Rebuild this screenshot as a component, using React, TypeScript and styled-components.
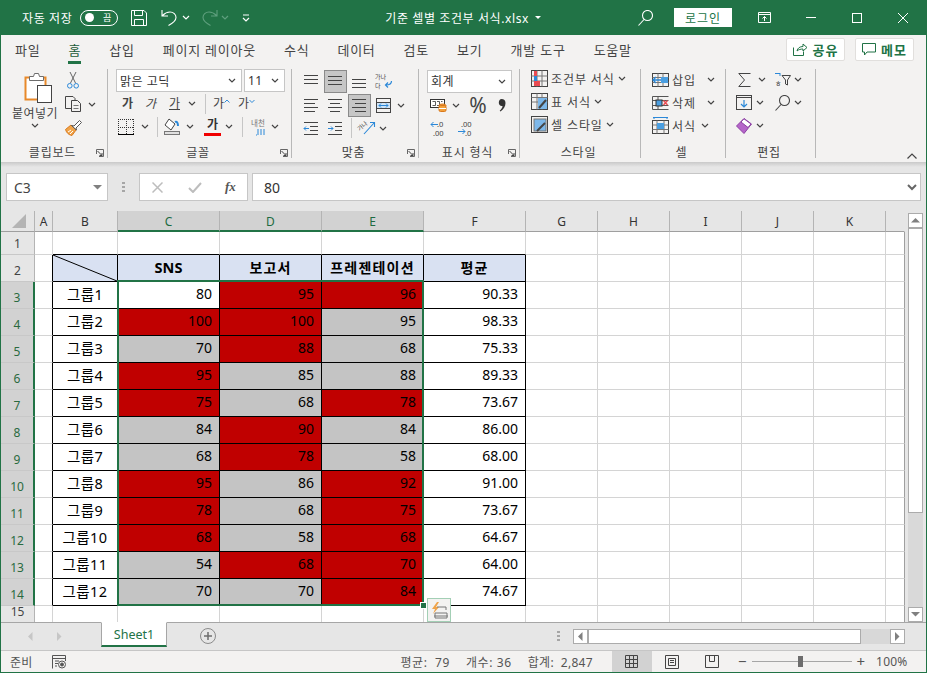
import React from "react";
import styled, { createGlobalStyle } from "styled-components";

const GREEN = "#217346";
const FONT = `"Noto Sans", "Noto Sans CJK KR", sans-serif`;

const Global = createGlobalStyle`
  html, body { margin: 0; padding: 0; background: #fff; }
  body { font-family: ${FONT}; }
  svg { display: block; }
`;

const Win = styled.div`
  width: 927px; height: 673px; box-sizing: border-box; display: flex; flex-direction: column;
  border: 1px solid ${GREEN}; border-top: 0; overflow: hidden; background: #e6e6e6; position: relative;
`;
const TitleBar = styled.div`
  height: 35px; flex: none; background: ${GREEN}; color: #fff; display: flex; align-items: center;
  padding-left: 22px; font-size: 12px; margin: 0 -1px;
`;
const Slot = styled.div<{ $w?: number; $ml?: number; $mt?: number }>`
  flex: none; display: flex; align-items: center; justify-content: center;
  ${(p) => (p.$w !== undefined ? `width: ${p.$w}px;` : "")}
  ${(p) => (p.$ml ? `margin-left: ${p.$ml}px;` : "")}
  ${(p) => (p.$mt ? `margin-top: ${p.$mt}px;` : "")}
`;
const TitleText = styled.span<{ $ml?: number }>`
  margin-left: ${(p) => p.$ml || 0}px; letter-spacing: 0.6px; white-space: nowrap; font-size: 12px; flex: none;
`;
const Toggle = styled.div`
  margin-left: 8px; width: 38px; height: 16px; box-sizing: border-box; border: 1px solid #fff; border-radius: 8px;
  display: flex; align-items: center; justify-content: space-between; padding: 0 6px 0 4px; font-size: 9px; flex: none;
  &::before { content: ""; width: 9px; height: 9px; border-radius: 50%; background: #fff; }
`;
const LoginBtn = styled.div`
  margin-left: 21px; width: 58px; height: 19px; background: #fff; color: ${GREEN}; font-size: 12px; letter-spacing: 1px;
  display: flex; align-items: center; justify-content: center; flex: none;
`;

const TabsRow = styled.div`
  height: 29px; flex: none; background: #f3f2f1; display: flex; align-items: center; gap: 28px; padding-left: 14px;
`;
const Tab = styled.div<{ $on?: boolean }>`
  position: relative; font-size: 13px; letter-spacing: 0.77px; color: ${(p) => (p.$on ? "#1d5c39" : "#444")}; white-space: nowrap; line-height: 18px; margin-top: 1px;
  ${(p) => p.$on ? `&::after { content: ""; position: absolute; left: 0; right: 0; bottom: -5px; height: 3px; background: ${GREEN}; }` : ""}
`;
const TabsEnd = styled.div`
  margin-left: auto; display: flex; gap: 10px; padding-right: 12px; margin-top: -1px;
`;
const ShareBtn = styled.div`
  width: 59px; height: 23px; box-sizing: border-box; background: #fff; border: 1px solid #e1dfdd; border-radius: 2px; display: flex; align-items: center; justify-content: center; gap: 5px;
  color: ${GREEN}; font-weight: 700; font-size: 13px; letter-spacing: 1px;
`;

const Ribbon = styled.div`
  height: 98px; flex: none; background: #f3f2f1; display: flex; padding-top: 5px; box-sizing: border-box; padding-bottom: 4px; position: relative;
`;
const Group = styled.div<{ $w: number }>`
  width: ${(p) => p.$w}px; box-sizing: border-box; flex: none; border-right: 1px solid #b8b8b8; display: flex; flex-direction: column;
`;
const GroupBody = styled.div<{ $pl?: number; $mt?: number }>`
  flex: 1; display: flex; flex-direction: column; padding-left: ${(p) => p.$pl || 0}px; margin-top: ${(p) => p.$mt || 0}px; min-height: 0;
`;
const GroupLabel = styled.div`
  height: 13px; flex: none; display: grid; grid-template-columns: 1fr auto 1fr; align-items: center; font-size: 12px; color: #444; letter-spacing: 0.8px; padding-right: 3px;
  & > span { grid-column: 2; white-space: nowrap; margin-top: -2px; }
  & > svg { grid-column: 3; justify-self: end; }
`;
const RRow = styled.div<{ $h?: number }>`
  height: ${(p) => p.$h || 23}px; flex: none; display: flex; align-items: center;
`;
const Combo = styled.div<{ $w: number; $ml?: number }>`
  width: ${(p) => p.$w}px; height: 23px; box-sizing: border-box; border: 1px solid #c6c6c6; background: #fff; margin-left: ${(p) => p.$ml || 0}px;
  display: flex; align-items: center; justify-content: space-between; padding: 0 5px 0 3px; font-size: 12px; color: #333; letter-spacing: 0.5px; flex: none;
`;
const Glyph = styled.span<{ $size?: number; $bold?: boolean; $italic?: boolean; $under?: boolean; $color?: string }>`
  font-size: ${(p) => p.$size || 12}px; font-weight: ${(p) => (p.$bold ? 700 : 400)}; color: ${(p) => p.$color || "#444"};
  font-style: ${(p) => (p.$italic ? "italic" : "normal")}; text-decoration: ${(p) => (p.$under ? "underline" : "none")}; line-height: 1;
`;
const VSep = styled.div<{ $w: number }>`
  width: ${(p) => p.$w}px; flex: none; height: 20px; display: flex; justify-content: center;
  &::after { content: ""; width: 1px; height: 100%; background: #c6c6c6; }
`;
const Selected = styled.div`
  width: 23px; height: 23px; box-sizing: border-box; background: #c6c6c6; border: 1px solid #8a8a8a; display: flex; align-items: center; justify-content: center;
`;
const RedGlyph = styled.div`
  display: flex; flex-direction: column; align-items: center; width: 17px; font-size: 12px; font-weight: 700; color: #333; line-height: 14px;
  &::after { content: ""; width: 17px; height: 3px; background: #f00000; margin-top: 1px; }
`;
const PasteCol = styled.div`
  width: 50px; margin-left: 9px; display: flex; flex-direction: column; align-items: center; flex: none; font-size: 12px; color: #444; letter-spacing: 0.4px; white-space: nowrap;
`;
const PasteText = styled.span`
  margin-top: 1px; line-height: 18px;
`;
const ClipBody = styled.div`
  flex: 1; display: flex; padding-top: 2px; min-height: 0;
`;
const SmallCol = styled.div`
  display: flex; flex-direction: column; margin-left: 5px; margin-top: -3px;
`;
const RibbonText = styled.span<{ $ml?: number }>`
  margin-left: ${(p) => p.$ml ?? 3}px; font-size: 12px; letter-spacing: 0.9px; color: #444; white-space: nowrap;
`;
const Collapse = styled.div`
  position: absolute; right: 9px; bottom: 3px;
`;

const Shadow = styled.div`
  height: 5px; flex: none; background: linear-gradient(#c9c9c9, #e6e6e6);
`;
const FormulaArea = styled.div`
  height: 44px; flex: none; display: flex; align-items: flex-start; padding: 6px 0 0 5px; box-sizing: border-box; background: #e6e6e6;
`;
const NameBox = styled.div`
  width: 102px; height: 28px; box-sizing: border-box; border: 1px solid #c6c6c6; background: #fff; display: flex; align-items: center; justify-content: space-between; padding: 0 5px 0 7px; font-size: 14px; color: #444; flex: none;
`;
const GripSlot = styled.div`
  width: 3px; height: 28px; margin: 0 14px; flex: none; display: flex; align-items: center;
`;
const FxBox = styled.div`
  width: 109px; height: 28px; box-sizing: border-box; border: 1px solid #c6c6c6; background: #fff; display: flex; align-items: center; flex: none; padding-left: 12px;
`;
const FxText = styled.span`
  font-family: "Liberation Serif", serif; font-style: italic; font-weight: 700; font-size: 13px; color: #555;
`;
const FormulaInput = styled.div`
  margin-left: 4px; width: 669px; height: 28px; box-sizing: border-box; border: 1px solid #c6c6c6; background: #fff; display: flex; align-items: center; justify-content: space-between; padding: 0 3px 0 11px; font-size: 14px; color: #333; flex: none;
`;

const Sheet = styled.div`
  height: 411px; flex: none; display: flex;
`;
const GridWrap = styled.div`
  position: relative; width: 904px; height: 411px; overflow: hidden; flex: none; background: #fff;
`;
const Grid = styled.div`
  display: grid;
  grid-template-columns: 34px 18px 65px repeat(4, 102px) repeat(5, 72px) 19px;
  grid-template-rows: 21px 23px repeat(13, 27px) 17px;
`;
const ColHead = styled.div<{ $sel?: boolean; $end?: boolean }>`
  background: ${(p) => (p.$sel ? "#d2d2d2" : "#e6e6e6")};
  box-sizing: border-box; display: flex; align-items: center; justify-content: center; font-size: 12px;
  color: ${(p) => (p.$sel ? "#1d6b41" : "#333")};
  border-right: 1px solid ${(p) => (p.$end ? "transparent" : "#b4b4b4")};
  border-bottom: ${(p) => (p.$sel ? `2px solid ${GREEN}` : "1px solid #9f9f9f")};
  ${(p) => (p.$sel ? "padding-top: 1px;" : "")}
`;
const RowHead = styled.div<{ $sel?: boolean }>`
  box-sizing: border-box; background: ${(p) => (p.$sel ? "#d2d2d2" : "#e6e6e6")};
  color: ${(p) => (p.$sel ? "#2a6a3f" : "#444")}; font-size: 12px;
  display: flex; align-items: flex-end; justify-content: center; line-height: 20px;
  border-bottom: 1px solid #c8c8c8;
  border-right: ${(p) => (p.$sel ? `2px solid ${GREEN}` : "1px solid #b4b4b4")};
`;
type Kind = "label" | "num" | "head" | "latin" | "none";
const Cell = styled.div<{ $dr?: boolean; $db?: boolean; $bg?: string; $end?: boolean; $kind?: Kind }>`
  box-sizing: border-box; overflow: hidden; white-space: nowrap; color: #000; font-size: 14px; display: flex; align-items: center;
  background: ${(p) => p.$bg || "#fff"};
  border-right: 1px solid ${(p) => (p.$dr ? "#000" : p.$end ? "#9f9f9f" : "#d4d4d4")};
  border-bottom: 1px solid ${(p) => (p.$db ? "#000" : "#d4d4d4")};
  ${(p) => p.$kind === "num" ? "justify-content: flex-end; padding: 0 7px 3px 0;" : ""}
  ${(p) => p.$kind === "label" ? "justify-content: center; letter-spacing: 0.4px; font-size: 14.5px; padding-bottom: 3px;" : ""}
  ${(p) => p.$kind === "head" ? "justify-content: center; font-weight: 700; letter-spacing: 1.2px; padding-bottom: 3px;" : ""}
  ${(p) => p.$kind === "latin" ? "justify-content: center; font-weight: 700; font-size: 14.5px; padding-bottom: 3px;" : ""}
`;
const Selection = styled.div`
  position: absolute; left: 116px; top: 69px; width: 307px; height: 326px; box-sizing: border-box; border: 2px solid ${GREEN}; pointer-events: none;
`;
const FillHandle = styled.div`
  position: absolute; left: 419px; top: 391px; width: 7px; height: 7px; box-sizing: border-box; background: ${GREEN}; border: 1px solid #fff;
`;
const PasteOpt = styled.div`
  position: absolute; left: 426px; top: 387px; width: 24px; height: 24px; box-sizing: border-box; background: #f3f2f1; border: 1px solid #a3cfb5; display: flex; align-items: center; justify-content: center;
`;

const VScroll = styled.div`
  flex: 1; display: flex; flex-direction: column; padding: 2px 0 0 3px;
`;
const ScrollBtn = styled.div`
  width: 15px; height: 15px; box-sizing: border-box; background: #fff; border: 1px solid #ababab; display: flex; align-items: center; justify-content: center; flex: none;
`;
const VTrack = styled.div`
  flex: 1; width: 15px; background: #d9d9d9; display: flex; flex-direction: column;
`;
const VThumb = styled.div`
  height: 285px; box-sizing: border-box; background: #fff; border: 1px solid #ababab;
`;

const TabBar = styled.div`
  height: 28px; flex: none; box-sizing: border-box; border-top: 1px solid #a6a6a6; background: #e6e6e6; display: flex; align-items: flex-start;
`;
const SheetTab = styled.div`
  margin-left: 39px; width: 66px; height: 25px; box-sizing: border-box; margin-top: -1px; background: #fff; border: 1px solid #a6a6a6; border-top: 1px solid #fff; border-bottom: 2px solid ${GREEN};
  color: ${GREEN}; font-size: 12.5px; display: flex; align-items: center; justify-content: center; flex: none;
`;
const HTrack = styled.div`
  margin-left: 13px; margin-top: 6px; width: 332px; height: 15px; display: flex; flex: none;
`;
const HThumb = styled.div`
  width: 273px; box-sizing: border-box; background: #fff; border: 1px solid #ababab; flex: none;
`;
const HRest = styled.div`
  flex: 1; background: #d8d8d8;
`;

const StatusBar = styled.div`
  flex: 1; background: #f3f2f1; border-top: 1px solid #c6c6c6; display: flex; align-items: stretch; font-size: 12px; color: #555; padding-left: 9px;
`;
const StatusText = styled.span<{ $ml?: number; $ls?: number }>`
  margin-left: ${(p) => p.$ml || 0}px; align-self: center; white-space: nowrap; letter-spacing: ${(p) => p.$ls ?? 0.2}px; flex: none;
`;
const ViewBtn = styled.div<{ $on?: boolean; $ml?: number }>`
  width: 40px; flex: none; margin-left: ${(p) => p.$ml || 0}px; background: ${(p) => (p.$on ? "#d2d2d2" : "transparent")}; display: flex; align-items: center; justify-content: center;
`;
const Zoom = styled.div`
  width: 100px; height: 1px; background: #a6a6a6; align-self: center; display: flex; justify-content: center; align-items: center; margin-left: 5px; flex: none;
  &::after { content: ""; width: 5px; height: 11px; background: #6d6d6d; margin-left: -3px; }
`;
const ZoomSign = styled.span<{ $ml?: number }>`
  margin-left: ${(p) => p.$ml || 0}px; align-self: center; font-size: 15px; line-height: 1; color: #555; flex: none;
`;

/* ---------- icons ---------- */
type C = { c?: string };
const Chev = ({ c = "#444" }: C) => (
  <svg width="8" height="5" viewBox="0 0 8 5"><path d="M1 1l3 3 3-3" fill="none" stroke={c} strokeWidth="1.2" /></svg>
);
const Caret = ({ up }: { up?: boolean }) => (
  <svg width="6" height="9" viewBox="0 0 6 9" fill="none" stroke="#2b88d8"><path d={up ? "M.5 3.500L3 1l2.500 2.500" : "M.5 1L3 3.500 5.500 1"} /></svg>
);
const SaveI = () => (
  <svg width="16" height="16" viewBox="0 0 16 16" fill="none" stroke="#fff"><path d="M.5.5h12.5l2.5 2.5v12.5H.5z" /><path d="M3.5.5v5h8v-5M3.5 15.5v-6h9v6" /></svg>
);
const UndoI = ({ c = "#fff" }: C) => (
  <svg width="17" height="17" viewBox="0 0 17 17" fill="none" stroke={c} strokeWidth="1.1"><path d="M1 1v6h6M1.5 6.5C4 4 6 3 9 3c3.5 0 6 2.5 6 5.5 0 3-3 5.500-7.500 8" /></svg>
);
const RedoI = ({ c = "#5f9f7e" }: C) => (
  <svg width="17" height="17" viewBox="0 0 17 17" fill="none" stroke={c} strokeWidth="1.1"><path d="M16 1v6h-6M15.500 6.500C13 4 11 3 8 3 4.500 3 2 5.500 2 8.500c0 3 3 5.500 7.500 8" /></svg>
);
const QatI = () => (
  <svg width="8" height="8" viewBox="0 0 8 8" fill="none" stroke="#fff"><path d="M1 1h6" /><path d="M1 4l3 3 3-3" strokeWidth="1.2" /></svg>
);
const SearchI = ({ c = "#fff" }: C) => (
  <svg width="15" height="16" viewBox="0 0 15 16" fill="none" stroke={c} strokeWidth="1.1"><circle cx="9.500" cy="5.500" r="5" /><path d="M6 9.500L.5 15.500" /></svg>
);
const DisplayI = () => (
  <svg width="13" height="11" viewBox="0 0 13 11" fill="none" stroke="#fff"><path d="M.5.500h12v10H.5zM.5 2.500h12" strokeWidth="1" /><path d="M6.500 9V4.500M4.500 6.500l2-2 2 2" /></svg>
);
const MinI = () => <svg width="10" height="1"><rect width="10" height="1" fill="#fff" /></svg>;
const MaxI = () => <svg width="10" height="10"><rect x=".5" y=".5" width="9" height="9" fill="none" stroke="#fff" /></svg>;
const CloseI = () => <svg width="10" height="10" fill="none" stroke="#fff"><path d="M0 0l10 10M10 0L0 10" /></svg>;
const ShareI = () => (
  <svg width="15" height="14" viewBox="0 0 15 14" fill="none" stroke="#217346"><path d="M.5 5.500v8h10v-4" /><path d="M4 9c.5-3 3-4.500 6-4.500V2l4 3.500L10 9V7C8 7 5.500 7.500 4 9z" /></svg>
);
const CommentI = () => (
  <svg width="14" height="13" viewBox="0 0 14 13" fill="none" stroke="#217346"><path d="M.5.500h13v8.500H5L2.500 12V9h-2z" /></svg>
);
const PasteI = () => (
  <svg width="30" height="33" viewBox="0 0 30 33">
    <rect x="1.500" y="6.500" width="20" height="22" fill="#fff" stroke="#e8892b" strokeWidth="2" />
    <path d="M5.500 9.500v-4h4l1-3h4l1 3h4v4z" fill="#fff" stroke="#6d6d6d" />
    <rect x="13.500" y="14.500" width="14" height="17" fill="#fff" stroke="#444" />
  </svg>
);
const ScissorsI = () => (
  <svg width="12" height="17" viewBox="0 0 12 17" fill="none"><path d="M3 0l5.500 11M9 0L3.500 11" stroke="#666" /><circle cx="2.800" cy="13.800" r="2.300" stroke="#2b88d8" /><circle cx="9.200" cy="13.800" r="2.300" stroke="#2b88d8" /></svg>
);
const CopyI = () => (
  <svg width="17" height="16" viewBox="0 0 17 16" fill="none" stroke="#444"><path d="M6 12.500H.5V.500H8l2 2v2" /><path d="M6.500 4.500h6l3 3v8h-9z" fill="#f3f2f1" /><path d="M8.500 9.500h5M8.500 12.500h5" stroke="#777" /></svg>
);
const BrushI = () => (
  <svg width="17" height="16" viewBox="0 0 17 16"><path d="M.5 9.500L6 5l5 5-4 5.500C4 15 1.500 13 .5 9.500z" fill="#f0a44a" stroke="#d9781b" /><path d="M3 12l3-2M5 14l3-3" stroke="#fff" fill="none" /><path d="M6.500 5.500L9 6l5.500-5.500 2 2L11 8l.5 2z" fill="#fff" stroke="#555" /></svg>
);
const ExpandI = () => (
  <svg width="8" height="8" viewBox="0 0 8 8" fill="none" stroke="#666"><path d="M.500 5V.500H7.500V7.500H3" /><path d="M1.500 2L6 6.500M6 4v2.500H3.500" stroke="#444" /></svg>
);
const BorderI = () => (
  <svg width="16" height="16" viewBox="0 0 16 16" fill="none" shapeRendering="crispEdges"><path d="M0 .5h16M0 8h16M.5 0v16M8 0v16M15.500 0v16" stroke="#333" strokeDasharray="1 1" /><path d="M0 15.500h16" stroke="#000" /></svg>
);
const BucketI = () => (
  <svg width="17" height="17" viewBox="0 0 17 17" fill="none"><path d="M5 1L1 7l6 5 4-6z" stroke="#444" fill="#fff" /><path d="M11 4c2-1 3 1 3 4" stroke="#2b88d8" strokeWidth="2" /><rect x=".5" y="13.500" width="15" height="3" fill="#e0e0e0" stroke="#777" /></svg>
);
const PhoneticI = () => (
  <svg width="16" height="18" viewBox="0 0 16 18"><text x="0" y="8" fontSize="7.500" fill="#777" fontFamily="Noto Sans CJK KR">내천</text><path d="M7 11v6M10 11v6M13 11v6M5 17h1" stroke="#2b88d8" fill="none" /></svg>
);
const Lines = ({ d, children }: { d: number[][]; children?: React.ReactNode }) => (
  <svg width="16" height="16" viewBox="0 0 16 16" fill="none">
    {d.map(([a, y, b], i) => <path key={i} d={`M${a} ${y + 0.5}H${b}`} stroke="#444" />)}
    {children}
  </svg>
);
const WrapI = () => (
  <svg width="18" height="17" viewBox="0 0 18 17" fill="none" overflow="visible">
    <text x="0" y="5.500" fontSize="6" fill="#444" fontFamily="Noto Sans CJK KR">가나</text>
    <text x="0" y="14.500" fontSize="6" fill="#444" fontFamily="Noto Sans CJK KR">다</text>
    <path d="M16.500 8c0 3-2 4-5.500 4M13 9.500L10.500 12l2.500 2.500" stroke="#2b88d8" strokeWidth="1.200" />
  </svg>
);
const MergeI = () => (
  <svg width="15" height="15" viewBox="0 0 15 15" fill="none"><rect x=".5" y=".5" width="14" height="14" stroke="#444" /><rect x="1" y="4" width="13" height="7" fill="#cfe4f7" /><path d="M.5 4.500h14M.5 10.500h14" stroke="#444" /><path d="M3 7.500h9M5 5.500l-2 2 2 2M10 5.500l2 2-2 2" stroke="#2b88d8" /></svg>
);
const OrientI = () => (
  <svg width="18" height="14" viewBox="0 0 18 14" fill="none" overflow="visible"><text x="0" y="8" fontSize="6" fill="#444" fontFamily="Noto Sans CJK KR" transform="rotate(-40 4 7)">가나</text><path d="M6 13L16 2M12 1.500h4.500V6" stroke="#2b88d8" strokeWidth="1.100" /></svg>
);
const AcctI = () => (
  <svg width="17" height="15" viewBox="0 0 17 15" fill="none"><rect x=".5" y="1.500" width="14" height="8" stroke="#333" fill="#fff" /><path d="M2.500 3.500h3v4h-3M7 3.500h2.500v4H7M11 3.500h1.500" stroke="#333" strokeWidth=".8" /><ellipse cx="12.500" cy="7.500" rx="3.500" ry="1.500" fill="#f3a13c" stroke="#d9781b" /><rect x="9" y="7.500" width="7" height="6" rx="1.500" fill="#f3a13c" stroke="#d9781b" /><path d="M9 10.500h7" stroke="#fff" /></svg>
);
const CommaI = () => (
  <svg width="8" height="13" viewBox="0 0 8 13"><path d="M3.500 0C6 0 7.500 1.500 7.500 4c0 3.500-2 6.500-5 8.500l-.8-.8C3.500 10 4.500 8.500 4.500 7 2.500 7.500 .8 6 .8 3.800.8 1.500 2 0 3.500 0z" fill="#333" /></svg>
);
const DecI = ({ rev }: { rev?: boolean }) => (
  <svg width="17" height="17" viewBox="0 0 17 17" fill="none" overflow="visible">
    <text x={rev ? 4 : 7} y="7" fontSize="7.500" fill="#444" fontFamily="Noto Sans">{rev ? ".00" : ".0"}</text>
    <text x={rev ? 8 : 3} y="16" fontSize="7.500" fill="#444" fontFamily="Noto Sans">{rev ? ".0" : ".00"}</text>
    {rev
      ? <path d="M1 11.500h7M5.500 9l2.500 2.500L5.500 14" stroke="#2b88d8" />
      : <path d="M8 4.500H1M3.500 2L1 4.500 3.500 7" stroke="#2b88d8" />}
  </svg>
);
const CondI = () => (
  <svg width="17" height="17" viewBox="0 0 17 17" fill="none"><rect x=".5" y=".5" width="16" height="16" stroke="#444" /><path d="M.5 6h16M.5 11h16M6 .5v16M11 .5v16" stroke="#777" /><rect x="3" y="1" width="3" height="5" fill="#e94b52" /><rect x="3" y="11" width="6" height="5" fill="#e94b52" /><rect x="3" y="6" width="3" height="5" fill="#2b88d8" /></svg>
);
const TableI = () => (
  <svg width="17" height="17" viewBox="0 0 17 17" fill="none"><rect x=".5" y=".5" width="16" height="16" stroke="#444" /><path d="M.5 4.500h16M6 .5v16M11 .5v16M.5 9h16" stroke="#777" /><rect x="7" y="5" width="9" height="11" fill="#7db8ea" /><path d="M8 15l7-8" stroke="#444" strokeWidth="2" /></svg>
);
const CellStyleI = () => (
  <svg width="17" height="17" viewBox="0 0 17 17" fill="none"><rect x=".5" y=".5" width="16" height="16" stroke="#444" /><rect x="3" y="3" width="12" height="12" fill="#7db8ea" stroke="#777" /><path d="M6 15l8-8" stroke="#444" strokeWidth="2" /></svg>
);
const InsertI = () => (
  <svg width="17" height="14" viewBox="0 0 17 14" fill="none"><rect x=".5" y=".5" width="16" height="13" stroke="#444" /><path d="M.5 4.500h16M.5 9.500h16M6 .5v13M11 .5v13" stroke="#777" /><rect x="9" y="4" width="7" height="6" fill="#4b9fe1" /><path d="M9 7H1M4 4L1 7l3 3" stroke="#2b88d8" strokeWidth="1.300" /></svg>
);
const DeleteI = () => (
  <svg width="17" height="14" viewBox="0 0 17 14" fill="none"><path d="M.5.500h16M.5 13.500h16M.5.500v13M6 .5v13M.5 4.500h16M.5 9.500h16" stroke="#555" /><rect x="4" y="4" width="6" height="6" fill="#4b9fe1" stroke="#333" /><path d="M11.500 4.500l4 4.500M15.500 4.500l-4 4.500" stroke="#e94b52" strokeWidth="1.400" /></svg>
);
const FormatI = () => (
  <svg width="17" height="17" viewBox="0 0 17 17" fill="none"><path d="M1 .5h15M2 0v2M15 0v2" stroke="#2b88d8" /><rect x=".5" y="3.500" width="16" height="13" stroke="#444" /><path d="M5 3.500v13M12 3.500v13M.5 8h16M.5 12.500h16" stroke="#777" /><rect x="5" y="6" width="7" height="6" fill="#4b9fe1" /></svg>
);
const SigmaI = () => (
  <svg width="13" height="14" viewBox="0 0 13 14" fill="none" stroke="#444"><path d="M12.500 .5H.8L6.500 7 .8 13.500h11.700" /></svg>
);
const SortI = () => (
  <svg width="17" height="15" viewBox="0 0 17 15" fill="none"><path d="M1 1.500h5M6 1v3" stroke="#2b88d8" /><text x="1" y="14" fontSize="7" fill="#444" fontFamily="Noto Sans CJK KR">ㅎ</text><path d="M8 3.500h8.500L13.500 8v5l-2-1V8z" stroke="#444" /></svg>
);
const FillDownI = () => (
  <svg width="16" height="15" viewBox="0 0 16 15" fill="none"><rect x=".5" y=".5" width="15" height="14" stroke="#444" /><path d="M.5 2.500h15" stroke="#444" /><path d="M8 5v7M5 9l3 3 3-3" stroke="#2b88d8" strokeWidth="1.200" /></svg>
);
const EraserI = () => (
  <svg width="16" height="16" viewBox="0 0 16 16"><path d="M.5 8L8 .5 15.500 6 8 15.500z" fill="#b565c9" stroke="#8b3fa3" /><path d="M5 4l3-3.200 7 5.200-3 3.500z" fill="#fff" stroke="#8b3fa3" /></svg>
);
const CollapseI = () => (
  <svg width="10" height="6" viewBox="0 0 10 6" fill="none" stroke="#444" strokeWidth="1.200"><path d="M.5 5.500L5 1l4.500 4.500" /></svg>
);
const XI = () => <svg width="11" height="11" fill="none" stroke="#bdbdbd" strokeWidth="1.500"><path d="M.5.5l10 10M10.500.5l-10 10" /></svg>;
const CheckI = () => <svg width="14" height="11" fill="none" stroke="#bdbdbd" strokeWidth="2"><path d="M1 6l4 4 8-9" /></svg>;
const Triangle = ({ dir, c = "#808080" }: { dir: "down" | "up" | "left" | "right"; c?: string }) => {
  const d = { down: "M0 0h9L4.500 4.500z", up: "M0 4.500h9L4.500 0z", left: "M4.500 0v9L0 4.500z", right: "M0 0v9l4.500-4.500z" }[dir];
  return <svg width={dir === "left" || dir === "right" ? 5 : 9} height={dir === "left" || dir === "right" ? 9 : 5}><path d={d} fill={c} /></svg>;
};
const TinyDown = () => <svg width="6" height="3"><path d="M0 0h6L3 3z" fill="#fff" /></svg>;
const FormulaChev = () => <svg width="10" height="7" fill="none" stroke="#666" strokeWidth="2"><path d="M1 1l4 4 4-4" /></svg>;
const Grip = () => (
  <svg width="3" height="11"><rect width="3" height="2" y="0" fill="#a6a6a6" /><rect width="3" height="2" y="4" fill="#a6a6a6" /><rect width="3" height="2" y="8" fill="#a6a6a6" /></svg>
);
const Corner = () => <svg width="14" height="14"><path d="M14 0v14H0z" fill="#b4b4b4" /></svg>;
const Diag = () => (
  <svg width="64" height="26" viewBox="0 0 64 26"><path d="M0 0L64 26" stroke="#000" fill="none" /></svg>
);
const PasteOptI = () => (
  <svg width="17" height="17" viewBox="0 0 17 17" fill="none"><path d="M6 0L1 7h3L2 12l6-7H5l3-5z" fill="#f0a44a" /><path d="M6 5h9v3M4 11h12v5H4zM3 14h14" stroke="#777" /></svg>
);
const PlusI = () => (
  <svg width="16" height="16" viewBox="0 0 16 16" fill="none"><circle cx="8" cy="8" r="7.500" stroke="#8a8a8a" /><path d="M4 8h8M8 4v8" stroke="#6d6d6d" strokeWidth="1.500" /></svg>
);
const MacroI = () => (
  <svg width="15" height="14" viewBox="0 0 15 14" fill="none" stroke="#555"><path d="M.5 13.500V.5h13V6M.5 3.500h13M3 6h4M3 8.500h3M3 11h2" /><circle cx="10" cy="9.500" r="3.500" /><circle cx="10" cy="9.500" r="1.500" fill="#555" /></svg>
);
const NormalI = () => (
  <svg width="13" height="13" fill="none" stroke="#444"><path d="M.5.500h12v12H.5zM4.500.5v12M8.500.5v12M.5 4.500h12M.5 8.500h12" /></svg>
);
const PageI = () => (
  <svg width="14" height="14" fill="none" stroke="#444"><path d="M.5.500h13v13H.5zM3.500 3.500h7v7h-7zM5 5.500h4M5 7.500h4" /></svg>
);
const BreakI = () => (
  <svg width="14" height="13" fill="none" stroke="#444"><path d="M.5.500h13v12H.5zM4.500.5v6h5v-6" /></svg>
);

/* ---------- data ---------- */
const R = "#c00000";
const G = "#c4c4c4";
type Row = { n: string; v: [string, string][]; avg: string };
const mk = (n: string, a: string, b: string, c: string, fa: string, avg: string): Row => ({
  n, avg,
  v: [[a, fa[0] === "R" ? R : fa[0] === "G" ? G : "#fff"], [b, fa[1] === "R" ? R : G], [c, fa[2] === "R" ? R : G]],
});
const data: Row[] = [
  mk("그룹1", "80", "95", "96", "WRR", "90.33"),
  mk("그룹2", "100", "100", "95", "RRG", "98.33"),
  mk("그룹3", "70", "88", "68", "GRG", "75.33"),
  mk("그룹4", "95", "85", "88", "RGG", "89.33"),
  mk("그룹5", "75", "68", "78", "RGR", "73.67"),
  mk("그룹6", "84", "90", "84", "GRG", "86.00"),
  mk("그룹7", "68", "78", "58", "GRG", "68.00"),
  mk("그룹8", "95", "86", "92", "RGR", "91.00"),
  mk("그룹9", "78", "68", "75", "RGR", "73.67"),
  mk("그룹10", "68", "58", "68", "RGR", "64.67"),
  mk("그룹11", "54", "68", "70", "GRR", "64.00"),
  mk("그룹12", "70", "70", "84", "GGR", "74.67"),
];
const cols = ["A", "B", "C", "D", "E", "F", "G", "H", "I", "J", "K", ""];
const heads = ["SNS", "보고서", "프레젠테이션", "평균"];

const gridCells = () => {
  const out: React.ReactNode[] = [];
  out.push(<ColHead key="corner"><Slot $w={33}><Slot $ml={3}><Corner /></Slot></Slot></ColHead>);
  cols.forEach((c, i) => out.push(
    <ColHead key={"h" + i} $sel={i >= 2 && i <= 4} $end={i === 11}>{c}</ColHead>
  ));
  for (let r = 1; r <= 15; r++) {
    out.push(<RowHead key={"r" + r} $sel={r >= 3 && r <= 14}>{r}</RowHead>);
    cols.forEach((_, c) => {
      const dr = c <= 5 && r >= 2 && r <= 14;
      const db = c >= 1 && c <= 5 && r >= 1 && r <= 14;
      let kind: Kind = "none";
      let bg: string | undefined;
      let content: React.ReactNode = null;
      if (r === 2 && c === 1) { bg = "#d9e1f2"; content = <Diag />; }
      if (r === 2 && c >= 2 && c <= 5) { bg = "#d9e1f2"; kind = c === 2 ? "latin" : "head"; content = heads[c - 2]; }
      if (r >= 3 && r <= 14) {
        const row = data[r - 3];
        if (c === 1) { kind = "label"; content = row.n; }
        if (c >= 2 && c <= 4) { kind = "num"; content = row.v[c - 2][0]; bg = row.v[c - 2][1]; }
        if (c === 5) { kind = "num"; content = row.avg; }
      }
      out.push(<Cell key={r + "-" + c} $dr={dr} $db={db} $bg={bg} $kind={kind} $end={c === 11}>{content}</Cell>);
    });
  }
  return out;
};

const tabs = ["파일", "홈", "삽입", "페이지 레이아웃", "수식", "데이터", "검토", "보기", "개발 도구", "도움말"];

const Label = ({ t }: { t: string }) => (
  <GroupLabel><span>{t}</span><ExpandI /></GroupLabel>
);
const PlainLabel = ({ t }: { t: string }) => (
  <GroupLabel><span>{t}</span></GroupLabel>
);

export default function App() {
  return (
    <Win>
      <Global />
      <TitleBar>
        <TitleText>자동 저장</TitleText>
        <Toggle>끔</Toggle>
        <Slot $w={16} $ml={13}><SaveI /></Slot>
        <Slot $w={17} $ml={14}><UndoI /></Slot>
        <Slot $w={8} $ml={4}><Chev c="#fff" /></Slot>
        <Slot $w={17} $ml={11}><RedoI /></Slot>
        <Slot $w={8} $ml={3}><Chev c="#5f9f7e" /></Slot>
        <Slot $w={8} $ml={13}><QatI /></Slot>
        <TitleText $ml={135}>기준 셀별 조건부 서식.xlsx</TitleText>
        <Slot $w={8} $ml={5}><TinyDown /></Slot>
        <Slot $w={15} $ml={96}><SearchI /></Slot>
        <LoginBtn>로그인</LoginBtn>
        <Slot $w={13} $ml={26}><DisplayI /></Slot>
        <Slot $w={10} $ml={35}><MinI /></Slot>
        <Slot $w={10} $ml={36}><MaxI /></Slot>
        <Slot $w={10} $ml={36}><CloseI /></Slot>
      </TitleBar>

      <TabsRow>
        {tabs.map((t) => <Tab key={t} $on={t === "홈"}>{t}</Tab>)}
        <TabsEnd>
          <ShareBtn><ShareI />공유</ShareBtn>
          <ShareBtn><CommentI />메모</ShareBtn>
        </TabsEnd>
      </TabsRow>

      <Ribbon>
        <Group $w={107}>
          <ClipBody>
            <PasteCol>
              <Slot $ml={7}><PasteI /></Slot>
              <PasteText>붙여넣기</PasteText>
              <Slot><Chev /></Slot>
            </PasteCol>
            <SmallCol>
              <RRow $h={24}><Slot $w={16}><ScissorsI /></Slot></RRow>
              <RRow $h={24}><Slot $w={17}><CopyI /></Slot><Slot $w={8} $ml={6}><Chev /></Slot></RRow>
              <RRow $h={24}><Slot $w={17}><BrushI /></Slot></RRow>
            </SmallCol>
          </ClipBody>
          <Label t="클립보드" />
        </Group>

        <Group $w={184}>
          <GroupBody $pl={8}>
            <RRow>
              <Combo $w={126}><span>맑은 고딕</span><Chev /></Combo>
              <Combo $w={41} $ml={2}><span>11</span><Chev /></Combo>
            </RRow>
            <RRow>
              <Slot $w={23}><Glyph $bold>가</Glyph></Slot>
              <Slot $w={23}><Glyph $italic>가</Glyph></Slot>
              <Slot $w={25}><Glyph $under>가</Glyph></Slot>
              <Slot $w={10}><Chev /></Slot>
              <VSep $w={16} />
              <Slot $w={17}><Glyph>가</Glyph><Caret up /></Slot>
              <Slot $w={17} $ml={8}><Glyph>가</Glyph><Caret /></Slot>
            </RRow>
            <RRow>
              <Slot $w={20}><BorderI /></Slot>
              <Slot $w={10} $ml={4}><Chev /></Slot>
              <VSep $w={14} />
              <Slot $w={17}><BucketI /></Slot>
              <Slot $w={8} $ml={5}><Chev /></Slot>
              <Slot $w={17} $ml={10}><RedGlyph>가</RedGlyph></Slot>
              <Slot $w={8} $ml={4}><Chev /></Slot>
              <VSep $w={18} />
              <Slot $w={16}><PhoneticI /></Slot>
              <Slot $w={8} $ml={4}><Chev /></Slot>
            </RRow>
          </GroupBody>
          <Label t="글꼴" />
        </Group>

        <Group $w={127}>
          <GroupBody $pl={7}>
            <RRow $h={24}>
              <Slot $w={24}><Lines d={[[1, 2, 15], [1, 6, 15], [1, 10, 15]]} /></Slot>
              <Slot $w={24}><Selected><Lines d={[[1, 3, 15], [1, 7, 15], [1, 11, 15]]} /></Selected></Slot>
              <Slot $w={24}><Lines d={[[1, 6, 15], [1, 10, 15], [1, 14, 15]]} /></Slot>
              <Slot $w={25}><WrapI /></Slot>
            </RRow>
            <RRow $h={24}>
              <Slot $w={24}><Lines d={[[1, 2, 15], [1, 6, 12], [1, 10, 15], [1, 14, 12]]} /></Slot>
              <Slot $w={24}><Lines d={[[1, 2, 15], [3, 6, 13], [1, 10, 15], [3, 14, 13]]} /></Slot>
              <Slot $w={24}><Selected><Lines d={[[1, 2, 15], [4, 6, 15], [1, 10, 15], [4, 14, 15]]} /></Selected></Slot>
              <Slot $w={25}><MergeI /></Slot>
              <Slot $w={10}><Chev /></Slot>
            </RRow>
            <RRow $h={22}>
              <Slot $w={24}>
                <Lines d={[[1, 2, 15], [7, 6, 15], [7, 10, 15], [1, 14, 15]]}><path d="M6 8.500H1M3 6.500l-2 2 2 2" stroke="#2b88d8" /></Lines>
              </Slot>
              <Slot $w={24}>
                <Lines d={[[1, 2, 15], [8, 6, 15], [8, 10, 15], [1, 14, 15]]}><path d="M1 8.500h5M4 6.500l2 2-2 2" stroke="#2b88d8" /></Lines>
              </Slot>
              <VSep $w={8} />
              <Slot $w={24}><OrientI /></Slot>
              <Slot $w={8}><Chev /></Slot>
            </RRow>
          </GroupBody>
          <Label t="맞춤" />
        </Group>

        <Group $w={101}>
          <GroupBody $pl={8}>
            <RRow $h={24}>
              <Combo $w={85}><span>회계</span><Chev /></Combo>
            </RRow>
            <RRow $h={24}>
              <Slot $w={22}><AcctI /></Slot>
              <Slot $w={11} $ml={1}><Chev /></Slot>
              <Slot $w={24} $ml={5}><Glyph $size={21} $color="#444">%</Glyph></Slot>
              <Slot $w={24}><CommaI /></Slot>
            </RRow>
            <RRow $h={22}>
              <Slot $w={22}><DecI /></Slot>
              <Slot $w={22} $ml={5}><DecI rev /></Slot>
            </RRow>
          </GroupBody>
          <Label t="표시 형식" />
        </Group>

        <Group $w={121}>
          <GroupBody $pl={11} $mt={-2}>
            <RRow><CondI /><RibbonText>조건부 서식</RibbonText><Slot $ml={3}><Chev /></Slot></RRow>
            <RRow><TableI /><RibbonText>표 서식</RibbonText><Slot $ml={3}><Chev /></Slot></RRow>
            <RRow><CellStyleI /><RibbonText>셀 스타일</RibbonText><Slot $ml={3}><Chev /></Slot></RRow>
          </GroupBody>
          <PlainLabel t="스타일" />
        </Group>

        <Group $w={85}>
          <GroupBody $pl={11} $mt={-1}>
            <RRow><InsertI /><RibbonText>삽입</RibbonText><Slot $ml={11}><Chev /></Slot></RRow>
            <RRow><DeleteI /><RibbonText>삭제</RibbonText><Slot $ml={11}><Chev /></Slot></RRow>
            <RRow><FormatI /><RibbonText>서식</RibbonText><Slot $ml={5}><Chev /></Slot></RRow>
          </GroupBody>
          <PlainLabel t="셀" />
        </Group>

        <Group $w={90}>
          <GroupBody $pl={10} $mt={-1}>
            <RRow>
              <Slot $w={16}><SigmaI /></Slot>
              <Slot $w={8} $ml={6}><Chev /></Slot>
              <Slot $w={17} $ml={8}><SortI /></Slot>
              <Slot $w={8} $ml={3}><Chev /></Slot>
            </RRow>
            <RRow>
              <Slot $w={16}><FillDownI /></Slot>
              <Slot $w={8} $ml={4}><Chev /></Slot>
              <Slot $w={17} $ml={10}><SearchI c="#444" /></Slot>
              <Slot $w={8} $ml={3}><Chev /></Slot>
            </RRow>
            <RRow>
              <Slot $w={16}><EraserI /></Slot>
              <Slot $w={8} $ml={4}><Chev /></Slot>
            </RRow>
          </GroupBody>
          <PlainLabel t="편집" />
        </Group>
        <Collapse><CollapseI /></Collapse>
      </Ribbon>

      <Shadow />
      <FormulaArea>
        <NameBox>C3<Triangle dir="down" /></NameBox>
        <GripSlot><Grip /></GripSlot>
        <FxBox>
          <XI />
          <Slot $ml={25}><CheckI /></Slot>
          <Slot $ml={23}><FxText>fx</FxText></Slot>
        </FxBox>
        <FormulaInput>80<FormulaChev /></FormulaInput>
      </FormulaArea>

      <Sheet>
        <GridWrap>
          <Grid>{gridCells()}</Grid>
          <Selection />
          <FillHandle />
          <PasteOpt><PasteOptI /></PasteOpt>
        </GridWrap>
        <VScroll>
          <ScrollBtn><Triangle dir="up" /></ScrollBtn>
          <VTrack><VThumb /></VTrack>
          <ScrollBtn><Triangle dir="down" /></ScrollBtn>
        </VScroll>
      </Sheet>

      <TabBar>
        <Slot $w={5} $ml={27} $mt={9}><Triangle dir="left" c="#c6c6c6" /></Slot>
        <Slot $w={5} $ml={24} $mt={9}><Triangle dir="right" c="#c6c6c6" /></Slot>
        <SheetTab>Sheet1</SheetTab>
        <Slot $w={16} $ml={33} $mt={5}><PlusI /></Slot>
        <Slot $w={3} $ml={341} $mt={8}><Grip /></Slot>
        <HTrack>
          <ScrollBtn><Triangle dir="left" /></ScrollBtn>
          <HThumb />
          <HRest />
          <ScrollBtn><Triangle dir="right" /></ScrollBtn>
        </HTrack>
      </TabBar>

      <StatusBar>
        <StatusText>준비</StatusText>
        <Slot $w={15} $ml={20}><MacroI /></Slot>
        <StatusText $ml={333} $ls={0.6}>평균:&nbsp; 79</StatusText>
        <StatusText $ml={16} $ls={0.6}>개수: 36</StatusText>
        <StatusText $ml={16} $ls={0.3}>합계:&nbsp; 2,847</StatusText>
        <ViewBtn $on $ml={19}><NormalI /></ViewBtn>
        <ViewBtn><PageI /></ViewBtn>
        <ViewBtn><BreakI /></ViewBtn>
        <ZoomSign $ml={6}>−</ZoomSign>
        <Zoom />
        <ZoomSign $ml={5}>+</ZoomSign>
        <StatusText $ml={11}>100%</StatusText>
      </StatusBar>
    </Win>
  );
}
